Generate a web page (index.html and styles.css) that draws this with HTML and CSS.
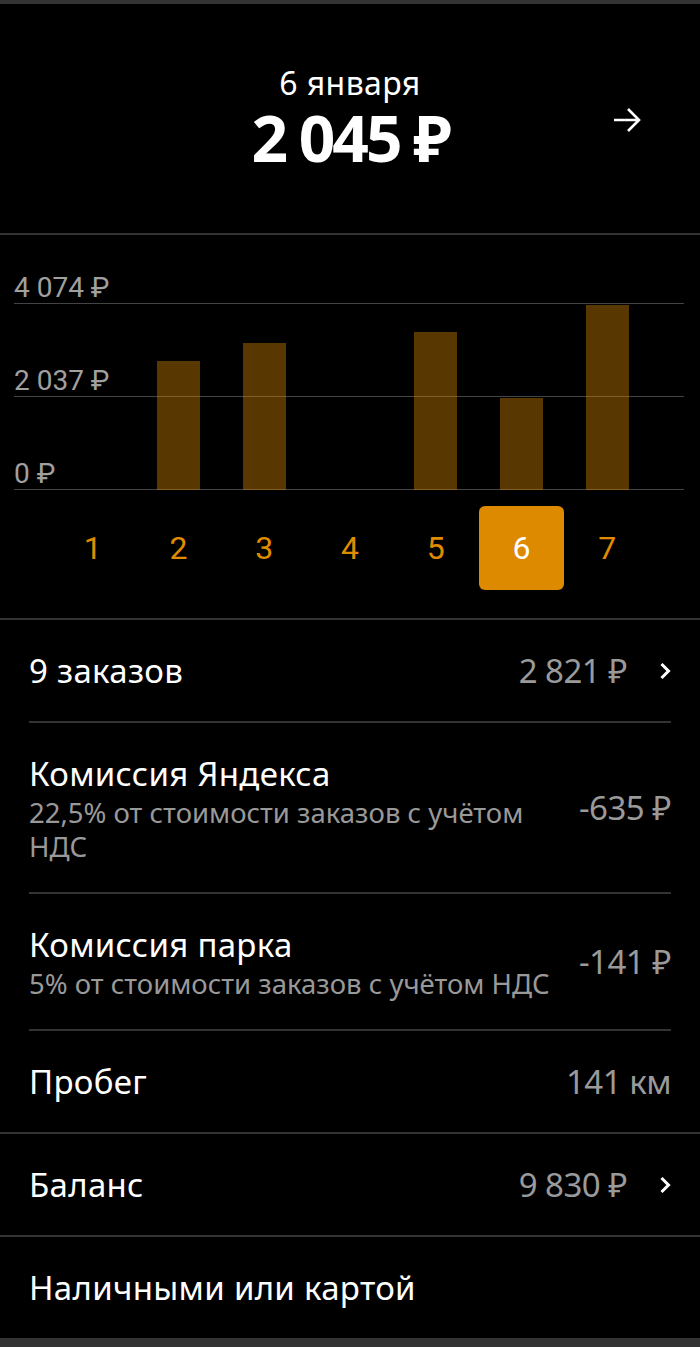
FILE: index.html
```html
<!DOCTYPE html>
<html>
	<head>
		<title>Заработок за день</title>
		<link rel="stylesheet" href="styles.css">
	</head>
	<body>
		<div class="topbar"></div>
		<div class="header">
			<div class="summary">
				<div class="date">6 января</div>
				<div class="amount">2 045 ₽</div>
			</div>
			<svg class="next" width="30" height="30" viewBox="0 0 30 30">
				<path d="M2 15 H27 M16 4 L27 15 L16 26" fill="none" stroke="#fff" stroke-width="2.6"/>
			</svg>
		</div>
		<div class="chart">
			<div class="plot">
				<div class="level first"><span>4 074 ₽</span></div>
				<div class="level"><span>2 037 ₽</span></div>
				<div class="level"><span>0 ₽</span></div>
				<div class="bars">
					<div class="col"></div>
					<div class="col"><div class="bar" style="height: 129px"></div></div>
					<div class="col"><div class="bar" style="height: 147px"></div></div>
					<div class="col"></div>
					<div class="col"><div class="bar" style="height: 158px"></div></div>
					<div class="col"><div class="bar" style="height: 92px"></div></div>
					<div class="col"><div class="bar" style="height: 185px"></div></div>
				</div>
			</div>
			<div class="days">
				<div class="day">1</div>
				<div class="day">2</div>
				<div class="day">3</div>
				<div class="day">4</div>
				<div class="day">5</div>
				<div class="day active">6</div>
				<div class="day">7</div>
			</div>
		</div>
		<div class="group">
			<div class="row">
				<div class="title">9 заказов</div>
				<div class="value">2 821 ₽</div>
				<svg class="chev" width="12" height="18" viewBox="0 0 12 18">
					<path d="M2.5 2 L9.5 9 L2.5 16" fill="none" stroke="#fff" stroke-width="3"/>
				</svg>
			</div>
			<div class="row">
				<div class="text">
					<div class="title">Комиссия Яндекса</div>
					<div class="sub">22,5% от стоимости заказов с учётом НДС</div>
				</div>
				<div class="value">-635 ₽</div>
			</div>
			<div class="row">
				<div class="text">
					<div class="title">Комиссия парка</div>
					<div class="sub">5% от стоимости заказов с учётом НДС</div>
				</div>
				<div class="value">-141 ₽</div>
			</div>
			<div class="row">
				<div class="title">Пробег</div>
				<div class="value">141 км</div>
			</div>
		</div>
		<div class="fullrow">
			<div class="row">
				<div class="title">Баланс</div>
				<div class="value">9 830 ₽</div>
				<svg class="chev" width="12" height="18" viewBox="0 0 12 18">
					<path d="M2.5 2 L9.5 9 L2.5 16" fill="none" stroke="#fff" stroke-width="3"/>
				</svg>
			</div>
		</div>
		<div class="fullrow">
			<div class="row">
				<div class="title">Наличными или картой</div>
			</div>
		</div>
		<div class="bottombar"></div>
	</body>
</html>
```

FILE: styles.css
```css
html {
	background-color: #000;
}
body {
	margin: 0px;
	color: #fff;
	font-family: "Noto Sans", sans-serif;
	width: 700px;
}
.topbar {
	height: 4px;
	background-color: #333;
}
.bottombar {
	height: 10px;
	background-color: #333;
}
.header {
	display: grid;
	grid-template-columns: 1fr auto 1fr;
	align-items: center;
	padding: 59px 0px 60px;
	border-bottom: 2px solid #333;
}
.summary {
	grid-column: 2;
	text-align: center;
}
.date {
	font-size: 32px;
	line-height: 40px;
	letter-spacing: 0.4px;
}
.amount {
	font-size: 64px;
	line-height: 70px;
	font-weight: bold;
	letter-spacing: -3px;
}
.next {
	grid-column: 3;
	justify-self: end;
	margin-right: 58px;
	margin-top: 4px;
}
.chart {
	padding: 33px 0px 28px;
	border-bottom: 2px solid #333;
}
.plot {
	position: relative;
	margin: 0px 16px 0px 14px;
}
.level {
	height: 93px;
	display: flex;
	align-items: flex-end;
	padding-bottom: 0px;
	border-bottom: 1.5px solid #444;
	box-sizing: border-box;
}
.level.first {
	height: 36px;
}
.level span {
	font-family: Roboto, sans-serif;
	font-size: 28px;
	line-height: 30px;
	color: #a0a0a0;
}
.bars {
	position: absolute;
	left: 36px;
	width: 600px;
	bottom: 0px;
	height: 186px;
	display: grid;
	grid-template-columns: repeat(7, 1fr);
	align-items: end;
}
.col {
	display: flex;
	justify-content: center;
}
.bar {
	width: 43px;
	background-color: rgba(221, 138, 0, 0.4);
}
.days {
	display: grid;
	grid-template-columns: repeat(7, 1fr);
	width: 600px;
	margin: 16px 0px 0px 50px;
}
.day {
	height: 84px;
	display: flex;
	align-items: center;
	justify-content: center;
	font-family: Roboto, sans-serif;
	font-size: 32px;
	color: #e08c00;
}
.day.active {
	background-color: #dd8a00;
	color: #fff;
	border-radius: 6px;
}
.group {
	margin: 0px 29px;
}
.group .row + .row {
	border-top: 2px solid #333;
}
.fullrow {
	border-top: 2px solid #333;
	padding: 0px 29px;
}
.row {
	display: flex;
	align-items: center;
	gap: 16px;
	padding: 28.5px 0px;
}
.text {
	flex: 1;
}
.row > .title {
	flex: 1;
}
.title {
	font-size: 33px;
	line-height: 44px;
	letter-spacing: 0.3px;
}
.sub {
	font-size: 27.5px;
	line-height: 34px;
	color: #999;
}
.value {
	font-size: 33px;
	line-height: 44px;
	color: #9a9a9a;
	white-space: nowrap;
	letter-spacing: -0.5px;
}
.chev {
	margin-left: 16px;
}
```
